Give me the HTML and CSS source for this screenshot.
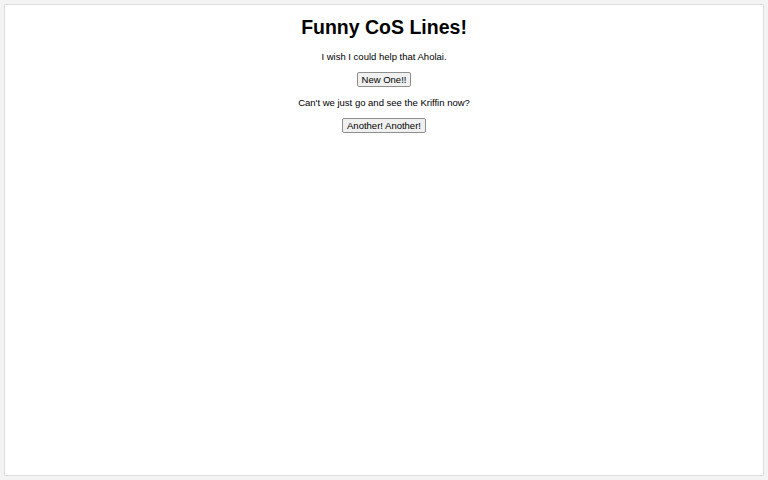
FILE: index.html
```html
<!DOCTYPE html>
<html lang="en">
<head>
<meta charset="utf-8">
<title>Funny CoS Lines!</title>
<link rel="stylesheet" href="styles.css">
</head>
<body>
<main class="panel">
  <h1 class="title">Funny CoS Lines!</h1>
  <p class="line">I wish I could help that Aholai.</p>
  <button class="btn" type="button">New One!!</button>
  <p class="line">Can't we just go and see the Kriffin now?</p>
  <button class="btn" type="button">Another! Another!</button>
</main>
</body>
</html>
```
FILE: styles.css
```css
html, body {
  margin: 0;
  height: 100%;
}

body {
  background: #f3f3f3;
  padding: 4px;
  box-sizing: border-box;
  font-family: "Liberation Sans", Arial, sans-serif;
}

.panel {
  background: #fff;
  border: 1px solid #dedede;
  height: 100%;
  box-sizing: border-box;
  display: flex;
  flex-direction: column;
  align-items: center;
  gap: 10px;
  padding-top: 11px;
  color: #000;
}

.title {
  font-size: 19.5px;
  line-height: 22px;
  font-weight: bold;
  margin: 0 0 3px;
}

.line {
  font-size: 9.5px;
  line-height: 11px;
  margin: 0;
}

.btn {
  font-family: "Liberation Sans", Arial, sans-serif;
  font-size: 9.5px;
  line-height: 11px;
  padding: 1px 4px;
  margin: 0;
  background: #f0f0f0;
  border: 1px solid #8f8f8f;
  border-radius: 2px;
  color: #000;
}
```
